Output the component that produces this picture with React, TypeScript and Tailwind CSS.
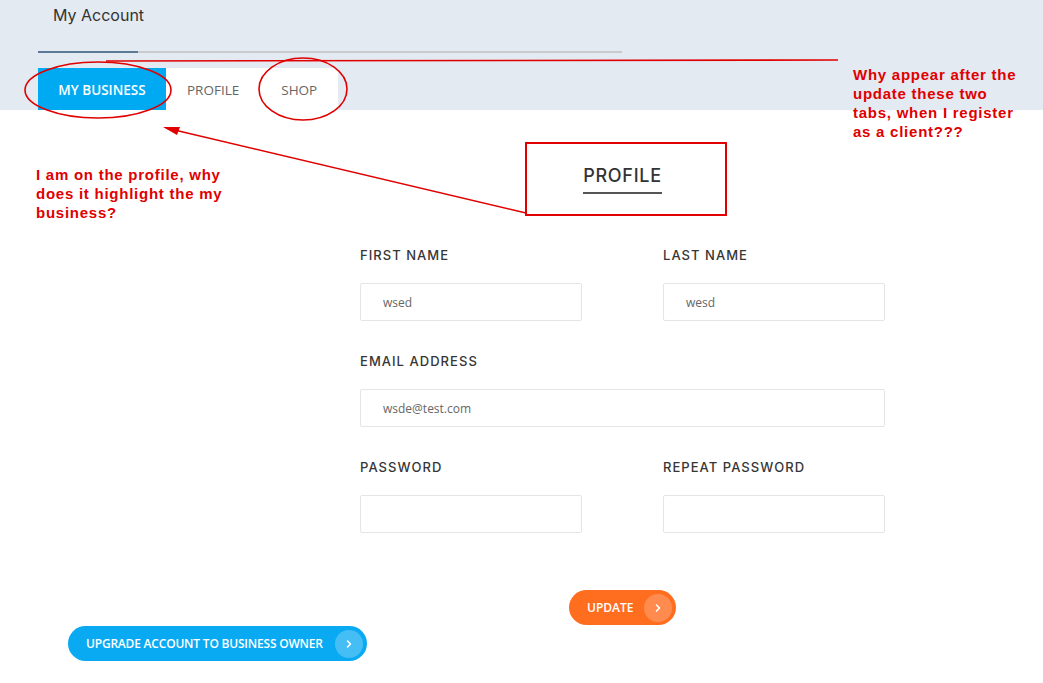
import React from "react";

const sans = "font-['Open_Sans',_'Liberation_Sans',_sans-serif]";
const head = "font-['Inter',_'Liberation_Sans',_sans-serif]";
const note = "font-['Liberation_Sans',_Arial,_sans-serif]";

function Chevron() {
  return (
    <svg width="8" height="10" viewBox="0 0 8 10" fill="none">
      <path d="M2.5 2 L5.5 5 L2.5 8" stroke="white" strokeWidth="1.6" strokeLinecap="round" strokeLinejoin="round" />
    </svg>
  );
}

function Field({ label, value, wide }: { label: string; value?: string; wide?: boolean }) {
  return (
    <div className={wide ? "col-span-2" : ""}>
      <label className={`${head} block text-[13px] leading-[16px] font-medium tracking-[0.08em] text-[#363636]`}>
        {label}
      </label>
      <div className="mt-[20px] flex h-[38px] items-center rounded-[2px] border border-[#e2e6e8] bg-white pl-[22px]">
        <span className={`${sans} pt-[1px] text-[12px] text-[#666]`}>{value}</span>
      </div>
    </div>
  );
}

function Annotations() {
  return (
    <>
      <svg className="pointer-events-none absolute inset-0" width="1043" height="683" viewBox="0 0 1043 683">
        <g stroke="#e00000" strokeWidth="1.6" fill="none">
          <line x1="106" y1="61" x2="838" y2="60" />
          <ellipse cx="98" cy="90" rx="73" ry="28" />
          <ellipse cx="303" cy="89" rx="44" ry="31" />
          <rect x="526" y="143" width="200" height="72" strokeWidth="2" />
          <line x1="526" y1="213" x2="166" y2="128" />
        </g>
        <path d="M163 127 L180 127 L177 135 Z" fill="#e00000" />
      </svg>
      <div className={`${note} absolute left-[853px] top-[65px] text-[15px] leading-[19px] font-bold tracking-[0.05em] text-[#e00000]`}>
        Why appear after the
        <br />
        update these two
        <br />
        tabs, when I register
        <br />
        as a client???
      </div>
      <div className={`${note} absolute left-[36px] top-[165px] text-[15px] leading-[19px] font-bold tracking-[0.05em] text-[#e00000]`}>
        I am on the profile, why
        <br />
        does it highlight the my
        <br />
        business?
      </div>
    </>
  );
}

export default function App() {
  return (
    <div className="relative h-[683px] w-[1043px] overflow-hidden bg-white">
      <header className="h-[110px] bg-[#e3eaf1] pl-[38px]">
        <div className={`${head} pl-[15px] pt-[5px] text-[16px] leading-[20px] text-[#333]`}>My Account</div>
        <div className="mt-[26px] flex h-[2px] w-[584px] bg-[#c8cbcd]">
          <div className="w-[100px] bg-[#5c7a96]" />
        </div>
        <nav className={`${sans} mt-[15px] flex h-[42px] text-[13.5px]`}>
          <div className="flex w-[128px] items-center justify-center bg-[#00aaf2] pt-[2px] font-semibold text-white">
            MY BUSINESS
          </div>
          <div className="flex w-[172px] items-center bg-white pl-[21px] pt-[2px] text-[#666]">
            <span>PROFILE</span>
            <span className="ml-[42px]">SHOP</span>
          </div>
        </nav>
      </header>

      <main>
        <div className="ml-[360px] w-[525px] pt-[55px]">
          <div className="flex justify-center">
            <h2 className={`${head} border-b-2 border-[#555] pb-[5px] text-[18px] leading-[22px] font-medium tracking-[0.04em] text-[#333]`}>
              PROFILE
            </h2>
          </div>
          <form className="mt-[53px] grid grid-cols-[222px_222px] gap-x-[81px] gap-y-[32px]">
            <Field label="FIRST NAME" value="wsed" />
            <Field label="LAST NAME" value="wesd" />
            <Field label="EMAIL ADDRESS" value="wsde@test.com" wide />
            <Field label="PASSWORD" />
            <Field label="REPEAT PASSWORD" />
          </form>
          <div className="mt-[57px] flex justify-center">
            <button className={`${sans} flex h-[35px] w-[107px] items-center justify-between rounded-full bg-[#ff6d1f] pl-[18px] pr-[4px] text-[12px] font-semibold text-white`}>
              UPDATE
              <span className="flex h-[28px] w-[28px] items-center justify-center rounded-full bg-[#ff8c4e]">
                <Chevron />
              </span>
            </button>
          </div>
        </div>
        <button className={`${sans} ml-[68px] mt-[1px] flex h-[35px] w-[299px] items-center justify-between rounded-full bg-[#0aaaf2] pl-[18px] pr-[4px] text-[12px] font-semibold tracking-[-0.2px] text-white`}>
          UPGRADE ACCOUNT TO BUSINESS OWNER
          <span className="flex h-[28px] w-[28px] items-center justify-center rounded-full bg-[#45bdf5]">
            <Chevron />
          </span>
        </button>
      </main>

      <Annotations />
    </div>
  );
}
